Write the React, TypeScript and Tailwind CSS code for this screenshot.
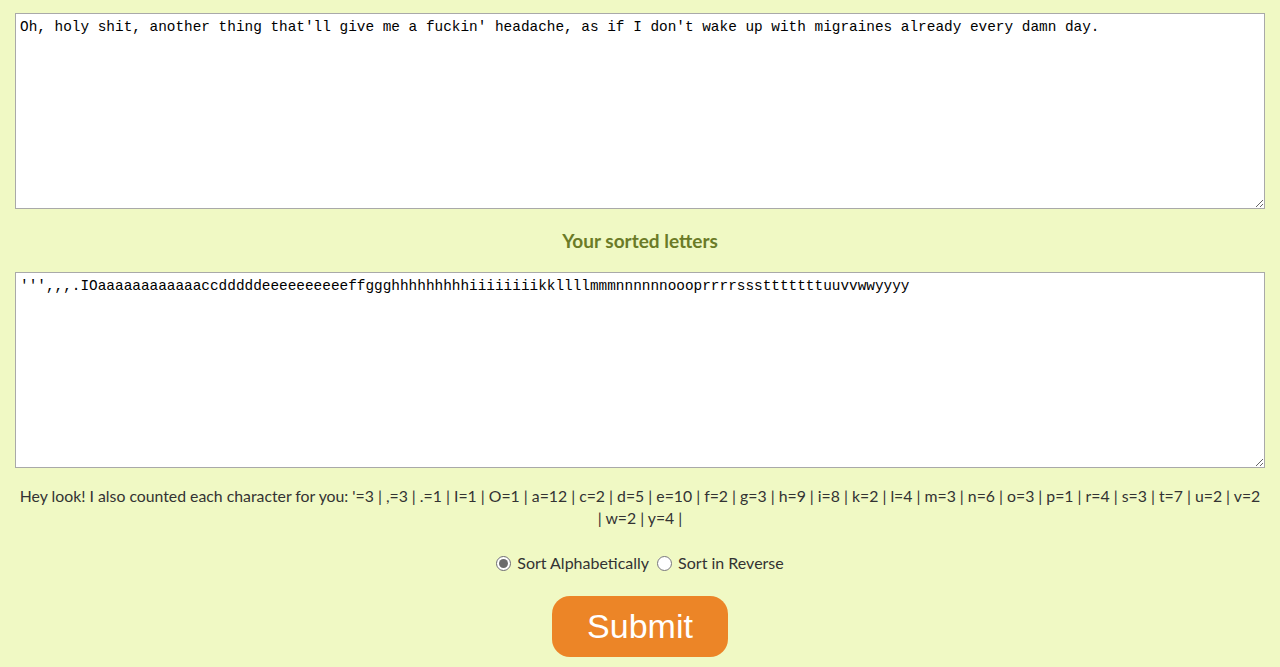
import { useState } from "react";

const input =
  "Oh, holy shit, another thing that'll give me a fuckin' headache, as if I don't wake up with migraines already every damn day.";

const counts: [string, number][] = [
  ["'", 3], [",", 3], [".", 1], ["I", 1], ["O", 1], ["a", 12], ["c", 2], ["d", 5], ["e", 10],
  ["f", 2], ["g", 3], ["h", 9], ["i", 8], ["k", 2], ["l", 4], ["m", 3], ["n", 6], ["o", 3],
  ["p", 1], ["r", 4], ["s", 3], ["t", 7], ["u", 2], ["v", 2], ["w", 2], ["y", 4],
];

export default function App() {
  const [text, setText] = useState(input);
  const [mode, setMode] = useState("alpha");

  const sorted = counts.map(([c, n]) => c.repeat(n)).join("");
  const first = counts.slice(0, 24);
  const rest = counts.slice(24);

  return (
    <div className="min-h-[667px] bg-[#f0f9c4] px-[15px] pt-[13px] font-['Lato','Noto_Sans',sans-serif] text-[#333]">
      <textarea
        value={text}
        onChange={(e) => setText(e.target.value)}
        className="block w-full h-[196px] bg-white border border-[#a9a9a9] px-[4px] py-[4px] font-['Liberation_Mono',monospace] text-[14.4px] leading-[18px] text-black outline-none"
      />

      <h2 className="mt-[20px] mb-[19px] text-center text-[19px] leading-6 font-bold text-[#6b7b27]">
        Your sorted letters
      </h2>

      <textarea
        readOnly
        value={mode === "alpha" ? sorted : sorted.split("").reverse().join("")}
        className="block w-full h-[196px] bg-white border border-[#a9a9a9] px-[4px] py-[4px] font-['Liberation_Mono',monospace] text-[14.4px] leading-[18px] text-black outline-none"
      />

      <p className="mt-[17px] text-center text-[15.8px] leading-[22px]">
        <span className="whitespace-nowrap">
          Hey look! I also counted each character for you:{" "}
          {first.map(([c, n]) => `${c}=${n}`).join(" | ")}
        </span>
        <br />
        <span className="whitespace-nowrap">
          {rest.map(([c, n]) => `| ${c}=${n} `).join("") + "|"}
        </span>
      </p>

      <div className="mt-[23px] flex items-center justify-center gap-1 text-[16px] leading-[22px]">
        <label className="flex items-center gap-[6px]">
          <input
            type="radio"
            name="sort"
            checked={mode === "alpha"}
            onChange={() => setMode("alpha")}
            className="w-[15px] h-[15px] m-0 accent-[#6b6b6b]"
          />
          Sort Alphabetically
        </label>
        <label className="flex items-center gap-[6px] ml-1">
          <input
            type="radio"
            name="sort"
            checked={mode === "rev"}
            onChange={() => setMode("rev")}
            className="w-[15px] h-[15px] m-0 accent-[#6b6b6b]"
          />
          Sort in Reverse
        </label>
      </div>

      <div className="mt-[22px] flex justify-center">
        <button className="w-[176px] h-[61px] rounded-[18px] bg-[#ec8527] text-white text-[34px] font-['Liberation_Sans',Arial,sans-serif]">
          Submit
        </button>
      </div>
    </div>
  );
}
